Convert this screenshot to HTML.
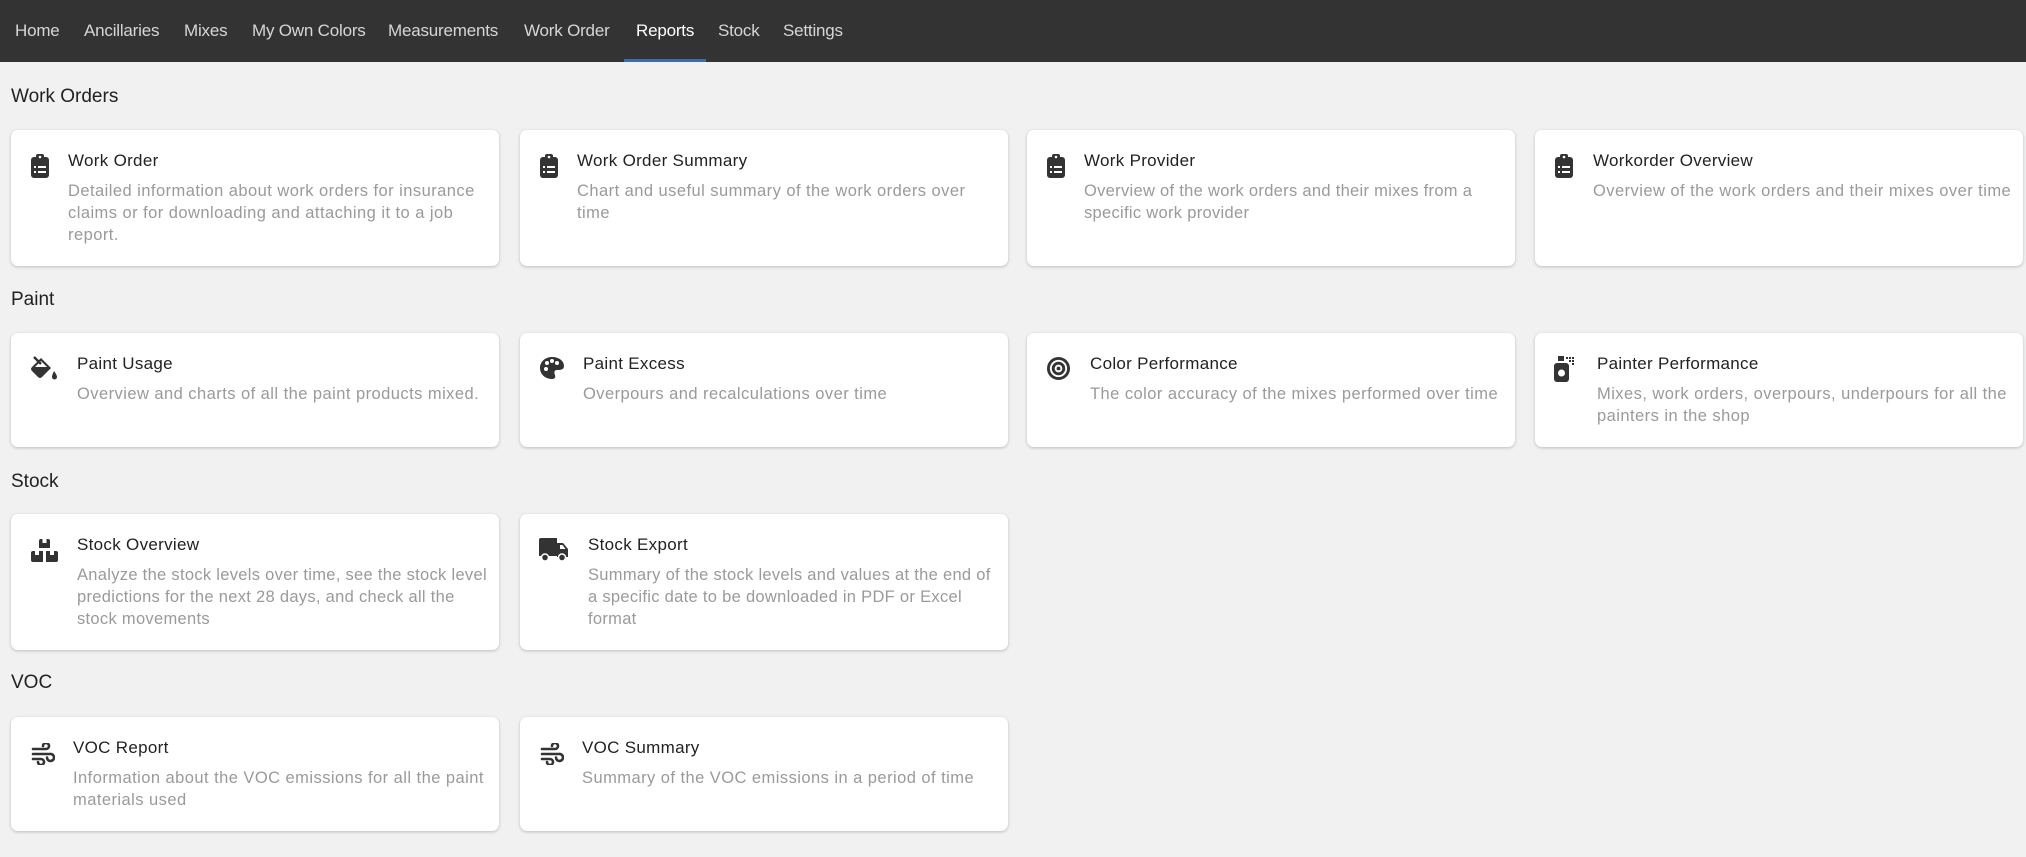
<!DOCTYPE html>
<html><head><meta charset="utf-8">
<style>
*{margin:0;padding:0;box-sizing:border-box}
body{width:2026px;height:857px;background:#f1f1f1;font-family:"Liberation Sans",sans-serif;position:relative;overflow:hidden}
.nav{position:absolute;left:0;top:0;width:2026px;height:62px;background:#333}
.nav span{position:absolute;top:21px;font-size:17px;color:#d6d6d6;line-height:20px;letter-spacing:-0.2px}
.nav span.act{color:#fff}
.ul{position:absolute;left:624px;top:59px;width:82px;height:3px;background:#3a6ea5}
h2{position:absolute;left:11px;font-size:19px;font-weight:normal;color:#222;line-height:24px}
.card{position:absolute;width:488px;background:#fff;border-radius:7px;box-shadow:0 1px 3px rgba(0,0,0,.22)}
.card svg{position:absolute;left:20px;top:24px}
.t{position:absolute;top:20px;font-size:17px;color:#222;line-height:22px;white-space:nowrap;letter-spacing:0.3px}
.d{position:absolute;top:50px;font-size:16.5px;color:#9a9a9a;line-height:22px;right:14px;letter-spacing:0.45px}
</style></head><body>
<div class="nav">
<span style="left:15px">Home</span>
<span style="left:84px">Ancillaries</span>
<span style="left:184px">Mixes</span>
<span style="left:252px">My Own Colors</span>
<span style="left:388px">Measurements</span>
<span style="left:524px">Work Order</span>
<span class="act" style="left:636px">Reports</span>
<span style="left:718px">Stock</span>
<span style="left:783px">Settings</span>
<div class="ul"></div>
</div>

<h2 style="top:85px">Work Orders</h2>
<h2 style="top:288px">Paint</h2>
<h2 style="top:470px">Stock</h2>
<h2 style="top:671px">VOC</h2>

<div class="card" style="left:11px;top:130px;height:136px">
<svg width="18" height="24" viewBox="0 0 18 24"><rect x="0" y="3" width="18" height="21" rx="3" fill="#333"/><rect x="5" y="0" width="8" height="6" rx="2" fill="#333"/><circle cx="9" cy="3" r="1.3" fill="#fff"/><rect x="3" y="12" width="2" height="2" fill="#fff"/><rect x="7" y="12" width="8" height="2" fill="#fff"/><rect x="3" y="17" width="2" height="2" fill="#fff"/><rect x="7" y="17" width="8" height="2" fill="#fff"/></svg>
<div class="t" style="left:57px">Work Order</div>
<div class="d" style="left:57px">Detailed information about work orders for insurance claims or for downloading and attaching it to a job report.</div>
</div>
<div class="card" style="left:520px;top:130px;height:136px">
<svg width="18" height="24" viewBox="0 0 18 24"><rect x="0" y="3" width="18" height="21" rx="3" fill="#333"/><rect x="5" y="0" width="8" height="6" rx="2" fill="#333"/><circle cx="9" cy="3" r="1.3" fill="#fff"/><rect x="3" y="12" width="2" height="2" fill="#fff"/><rect x="7" y="12" width="8" height="2" fill="#fff"/><rect x="3" y="17" width="2" height="2" fill="#fff"/><rect x="7" y="17" width="8" height="2" fill="#fff"/></svg>
<div class="t" style="left:57px">Work Order Summary</div>
<div class="d" style="left:57px">Chart and useful summary of the work orders over time</div>
</div>
<div class="card" style="left:1027px;top:130px;height:136px">
<svg width="18" height="24" viewBox="0 0 18 24"><rect x="0" y="3" width="18" height="21" rx="3" fill="#333"/><rect x="5" y="0" width="8" height="6" rx="2" fill="#333"/><circle cx="9" cy="3" r="1.3" fill="#fff"/><rect x="3" y="12" width="2" height="2" fill="#fff"/><rect x="7" y="12" width="8" height="2" fill="#fff"/><rect x="3" y="17" width="2" height="2" fill="#fff"/><rect x="7" y="17" width="8" height="2" fill="#fff"/></svg>
<div class="t" style="left:57px">Work Provider</div>
<div class="d" style="left:57px;right:0;letter-spacing:0.3px">Overview of the work orders and their mixes from a specific work provider</div>
</div>
<div class="card" style="left:1535px;top:130px;height:136px">
<svg width="18" height="24" viewBox="0 0 18 24"><rect x="0" y="3" width="18" height="21" rx="3" fill="#333"/><rect x="5" y="0" width="8" height="6" rx="2" fill="#333"/><circle cx="9" cy="3" r="1.3" fill="#fff"/><rect x="3" y="12" width="2" height="2" fill="#fff"/><rect x="7" y="12" width="8" height="2" fill="#fff"/><rect x="3" y="17" width="2" height="2" fill="#fff"/><rect x="7" y="17" width="8" height="2" fill="#fff"/></svg>
<div class="t" style="left:58px">Workorder Overview</div>
<div class="d" style="left:58px;right:0;white-space:nowrap">Overview of the work orders and their mixes over time</div>
</div>

<div class="card" style="left:11px;top:333px;height:114px">
<svg style="left:20px;top:23px" width="27" height="24" viewBox="0 0 27 24"><path d="M1 11 L10 2 L20 12 L11 21 Q9 23 7 21 L1 15 Q-1 13 1 11Z" fill="#333"/><path d="M4 11 L10 5 L16 11Z" fill="#fff"/><path d="M3 1 L10 8" stroke="#333" stroke-width="2.5"/><path d="M23 15 Q26 19 26 21 A2.5 2.5 0 0 1 21 21 Q21 19 23 15Z" fill="#333"/></svg>
<div class="t" style="left:66px">Paint Usage</div>
<div class="d" style="left:66px">Overview and charts of all the paint products mixed.</div>
</div>
<div class="card" style="left:520px;top:333px;height:114px">
<svg style="left:20px;top:24px" width="24" height="22" viewBox="0 0 24 22"><path d="M12 0 C19 0 24 4 24 9 C24 13 20 13 17 13 C14 13 14 16 15 18 C16 21 14 22 12 22 C5 22 0 17 0 11 C0 5 5 0 12 0Z" fill="#333"/><circle cx="6" cy="12" r="2" fill="#fff"/><circle cx="7" cy="6" r="2" fill="#fff"/><circle cx="12" cy="4" r="2" fill="#fff"/><circle cx="17" cy="6" r="2" fill="#fff"/></svg>
<div class="t" style="left:63px">Paint Excess</div>
<div class="d" style="left:63px">Overpours and recalculations over time</div>
</div>
<div class="card" style="left:1027px;top:333px;height:114px">
<svg style="left:20px;top:24px" width="23" height="23" viewBox="0 0 24 24"><circle cx="12" cy="12" r="10.5" fill="none" stroke="#333" stroke-width="3"/><circle cx="12" cy="12" r="5.5" fill="none" stroke="#333" stroke-width="3"/><circle cx="12" cy="12" r="2" fill="#333"/></svg>
<div class="t" style="left:63px">Color Performance</div>
<div class="d" style="left:63px">The color accuracy of the mixes performed over time</div>
</div>
<div class="card" style="left:1535px;top:333px;height:114px">
<svg style="left:19px;top:23px" width="24" height="26" viewBox="0 0 24 26"><rect x="4" y="0" width="6" height="5" fill="#333"/><rect x="0" y="7" width="15" height="19" rx="3" fill="#333"/><circle cx="7.5" cy="17" r="3.5" fill="#fff"/><rect x="12" y="1" width="2" height="2" fill="#333"/><rect x="15" y="1" width="2" height="2" fill="#333"/><rect x="18" y="1" width="2" height="2" fill="#333"/><rect x="15" y="4" width="2" height="2" fill="#333"/><rect x="18" y="4" width="2" height="2" fill="#333"/><rect x="18" y="7" width="2" height="2" fill="#333"/></svg>
<div class="t" style="left:62px">Painter Performance</div>
<div class="d" style="left:62px">Mixes, work orders, overpours, underpours for all the painters in the shop</div>
</div>

<div class="card" style="left:11px;top:514px;height:136px">
<svg style="left:20px;top:25px" width="27" height="23" viewBox="0 0 27 23"><path d="M8 2 Q8 0 10 0 H17 Q19 0 19 2 V9 H8Z" fill="#333"/><rect x="11.5" y="0" width="4" height="4" fill="#fff"/><path d="M0 14 Q0 12 2 12 H12 V23 H2 Q0 23 0 21Z" fill="#333"/><path d="M15 12 H25 Q27 12 27 14 V21 Q27 23 25 23 H15Z" fill="#333"/><rect x="4" y="12" width="4" height="4" fill="#fff"/><rect x="19" y="12" width="4" height="4" fill="#fff"/></svg>
<div class="t" style="left:66px">Stock Overview</div>
<div class="d" style="left:66px;right:0;letter-spacing:0.3px">Analyze the stock levels over time, see the stock level predictions for the next 28 days, and check all the stock movements</div>
</div>
<div class="card" style="left:520px;top:514px;height:136px">
<svg style="left:19px;top:24px" width="30" height="24" viewBox="0 0 30 24"><path d="M0 2 Q0 0 2 0 H18 V18 H0Z" fill="#333"/><path d="M18 5 H24 L29 11 V19 H18Z" fill="#333"/><path d="M21 7 H23.5 L26.5 11 H21Z" fill="#fff"/><circle cx="6" cy="19.5" r="3.5" fill="#333" stroke="#fff" stroke-width="1.5"/><circle cx="23" cy="19.5" r="3.5" fill="#333" stroke="#fff" stroke-width="1.5"/></svg>
<div class="t" style="left:68px">Stock Export</div>
<div class="d" style="left:68px;right:12px;letter-spacing:0.3px">Summary of the stock levels and values at the end of a specific date to be downloaded in PDF or Excel format</div>
</div>

<div class="card" style="left:11px;top:717px;height:114px">
<svg style="left:20px;top:26px" width="24" height="22" viewBox="0 0 24 22" fill="none" stroke="#333" stroke-width="2.6" stroke-linecap="round"><path d="M2 6 H15 A3 3 0 1 0 12 3"/><path d="M2 11 H19 A3.5 3.5 0 1 1 16 14.5"/><path d="M2 16 H10 A3 3 0 1 1 7 19"/></svg>
<div class="t" style="left:62px">VOC Report</div>
<div class="d" style="left:62px">Information about the VOC emissions for all the paint materials used</div>
</div>
<div class="card" style="left:520px;top:717px;height:114px">
<svg style="left:20px;top:26px" width="24" height="22" viewBox="0 0 24 22" fill="none" stroke="#333" stroke-width="2.6" stroke-linecap="round"><path d="M2 6 H15 A3 3 0 1 0 12 3"/><path d="M2 11 H19 A3.5 3.5 0 1 1 16 14.5"/><path d="M2 16 H10 A3 3 0 1 1 7 19"/></svg>
<div class="t" style="left:62px">VOC Summary</div>
<div class="d" style="left:62px">Summary of the VOC emissions in a period of time</div>
</div>
</body></html>
